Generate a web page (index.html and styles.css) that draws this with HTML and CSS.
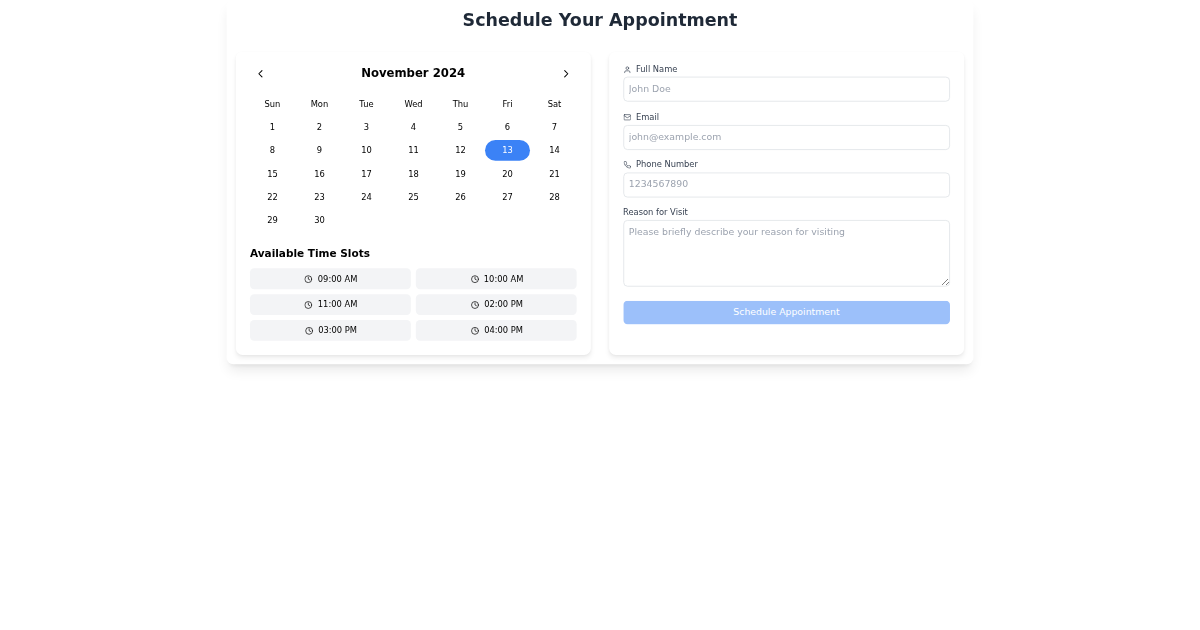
FILE: index.html
```html
<!DOCTYPE html>
<html lang="en">
<head>
<meta charset="utf-8">
<title>Schedule Your Appointment</title>
<link rel="stylesheet" href="styles.css">
</head>
<body>
<svg class="sprite" width="0" height="0" aria-hidden="true">
  <symbol id="i-clock" viewBox="0 0 24 24"><circle cx="12" cy="12" r="10"/><polyline points="12 6 12 12 16 14"/></symbol>
  <symbol id="i-left" viewBox="0 0 24 24"><path d="m15 18-6-6 6-6"/></symbol>
  <symbol id="i-right" viewBox="0 0 24 24"><path d="m9 18 6-6-6-6"/></symbol>
  <symbol id="i-user" viewBox="0 0 24 24"><path d="M20 21v-2a4 4 0 0 0-4-4H8a4 4 0 0 0-4 4v2"/><circle cx="12" cy="7" r="4"/></symbol>
  <symbol id="i-mail" viewBox="0 0 24 24"><rect width="20" height="16" x="2" y="4" rx="2"/><path d="m22 7-8.97 5.7a1.94 1.94 0 0 1-2.06 0L2 7"/></symbol>
  <symbol id="i-phone" viewBox="0 0 24 24"><path d="M22 16.92v3a2 2 0 0 1-2.18 2 19.79 19.79 0 0 1-8.63-3.07 19.5 19.5 0 0 1-6-6 19.79 19.79 0 0 1-3.07-8.67A2 2 0 0 1 4.11 2h3a2 2 0 0 1 2 1.72 12.84 12.84 0 0 0 .7 2.81 2 2 0 0 1-.45 2.11L8.09 9.91a16 16 0 0 0 6 6l1.27-1.27a2 2 0 0 1 2.11-.45 12.84 12.84 0 0 0 2.81.7A2 2 0 0 1 22 16.92z"/></symbol>
</svg>
<main class="shell">
  <h1 class="title">Schedule Your Appointment</h1>
  <div class="columns">
    <section class="panel">
      <div class="cal-head">
        <button class="nav" type="button"><svg class="ico ico-nav"><use href="#i-left"/></svg></button>
        <h2 class="month">November 2024</h2>
        <button class="nav" type="button"><svg class="ico ico-nav"><use href="#i-right"/></svg></button>
      </div>
      <div class="cal-grid">
        <div class="dow">Sun</div><div class="dow">Mon</div><div class="dow">Tue</div><div class="dow">Wed</div><div class="dow">Thu</div><div class="dow">Fri</div><div class="dow">Sat</div>
        <div class="day">1</div><div class="day">2</div><div class="day">3</div><div class="day">4</div><div class="day">5</div><div class="day">6</div><div class="day">7</div>
        <div class="day">8</div><div class="day">9</div><div class="day">10</div><div class="day">11</div><div class="day">12</div><div class="day selected">13</div><div class="day">14</div>
        <div class="day">15</div><div class="day">16</div><div class="day">17</div><div class="day">18</div><div class="day">19</div><div class="day">20</div><div class="day">21</div>
        <div class="day">22</div><div class="day">23</div><div class="day">24</div><div class="day">25</div><div class="day">26</div><div class="day">27</div><div class="day">28</div>
        <div class="day">29</div><div class="day">30</div>
      </div>
      <h3 class="slots-title">Available Time Slots</h3>
      <div class="slots">
        <button class="slot" type="button"><svg class="ico ico-clock"><use href="#i-clock"/></svg>09:00 AM</button>
        <button class="slot" type="button"><svg class="ico ico-clock"><use href="#i-clock"/></svg>10:00 AM</button>
        <button class="slot" type="button"><svg class="ico ico-clock"><use href="#i-clock"/></svg>11:00 AM</button>
        <button class="slot" type="button"><svg class="ico ico-clock"><use href="#i-clock"/></svg>02:00 PM</button>
        <button class="slot" type="button"><svg class="ico ico-clock"><use href="#i-clock"/></svg>03:00 PM</button>
        <button class="slot" type="button"><svg class="ico ico-clock"><use href="#i-clock"/></svg>04:00 PM</button>
      </div>
    </section>
    <form class="panel form">
      <div class="field">
        <label class="label"><svg class="ico ico-label"><use href="#i-user"/></svg>Full Name</label>
        <input class="input" type="text" placeholder="John Doe">
      </div>
      <div class="field">
        <label class="label"><svg class="ico ico-label"><use href="#i-mail"/></svg>Email</label>
        <input class="input" type="text" placeholder="john@example.com">
      </div>
      <div class="field">
        <label class="label"><svg class="ico ico-label"><use href="#i-phone"/></svg>Phone Number</label>
        <input class="input" type="text" placeholder="1234567890">
      </div>
      <div class="field">
        <label class="label">Reason for Visit</label>
        <textarea class="input area" placeholder="Please briefly describe your reason for visiting"></textarea>
      </div>
      <button class="submit" type="button">Schedule Appointment</button>
    </form>
  </div>
</main>
</body>
</html>
```
FILE: styles.css
```css
* { box-sizing: border-box; }
html, body { margin: 0; padding: 0; background: #fff; }
body { font-family: "DejaVu Sans", sans-serif; color: #000; height: 630px; overflow: hidden; }
.sprite { display: block; height: 0; }
.ico { fill: none; stroke: currentColor; stroke-width: 2; stroke-linecap: round; stroke-linejoin: round; flex: none; }
.shell {
  width: 896px; height: 436.8px; margin: 0 auto; padding: 12.2px 11.2px 10.8px; background: #fff;
  border-radius: 8px;
  box-shadow: 0 10px 15px -3px rgba(0,0,0,.09), 0 4px 6px -4px rgba(0,0,0,.09);
  transform: scale(.83333);
  transform-origin: top center;
  filter: blur(.25px);
}
.title { margin: 0; height: 50.2px; font-size: 21px; line-height: 25.2px; font-weight: 700; color: #1f2937; text-align: center; }
.columns { display: grid; grid-template-columns: 426px 426px; gap: 21.6px; }
.panel { height: 363.6px; padding: 16.8px; background: #fff; border-radius: 8px; box-shadow: 0 4px 6px -1px rgba(0,0,0,.07), 0 2px 4px -2px rgba(0,0,0,.07); }
.cal-head { display: flex; justify-content: space-between; align-items: center; height: 18px; padding: 0 5.6px 0 4.8px; }
.nav { display: flex; padding: 0; border: 0; background: none; color: #000; }
.ico-nav { width: 15px; height: 15px; stroke-width: 2; }
.month { margin: 0; font-size: 14px; font-weight: 700; line-height: 18px; }
.cal-grid { display: grid; grid-template-columns: repeat(7, 1fr); grid-auto-rows: 25.5px; gap: 2.5px; margin-top: 14.6px; font-size: 10px; }
.dow, .day { display: flex; align-items: center; justify-content: center; }
.selected { background: #3b82f6; color: #fff; border-radius: 13px; }
.slots-title { margin: 18.3px 0 0; font-size: 12.6px; line-height: 16.8px; font-weight: 700; }
.slots { display: grid; grid-template-columns: 1fr 1fr; grid-auto-rows: 25px; gap: 6px; margin-top: 9.6px; }
.slot { display: flex; align-items: center; justify-content: center; gap: 6px; padding: .6px 0 0 1px; border: 0; border-radius: 5px; background: #f3f4f6; color: #000; font: 10px "DejaVu Sans", sans-serif; }
.ico-clock { width: 10px; height: 10px; }
.form { display: flex; flex-direction: column; padding-top: 12px; }
.field { display: flex; flex-direction: column; margin-bottom: 9.2px; }
.label { display: flex; align-items: center; gap: 6px; height: 17.4px; padding-top: .6px; margin-bottom: .6px; font-size: 10px; color: #374151; }
.ico-label { width: 9.6px; height: 9.6px; }
.input { display: block; width: 100%; height: 30px; margin: 0; padding: 0 6px; border: 1px solid #e0e3e7; border-radius: 5px; background: #fff; font: 11.2px "DejaVu Sans", sans-serif; color: #000; outline: 0; }
.input::placeholder { color: #9ca3af; opacity: 1; }
.area { height: 80.4px; padding: 7px 6px; resize: vertical; }
.submit { height: 28.2px; margin-top: 7.2px; padding: 0; border: 0; border-radius: 5px; background: #3b82f6; opacity: .5; color: #fff; font: 11.2px "DejaVu Sans", sans-serif; }
```
